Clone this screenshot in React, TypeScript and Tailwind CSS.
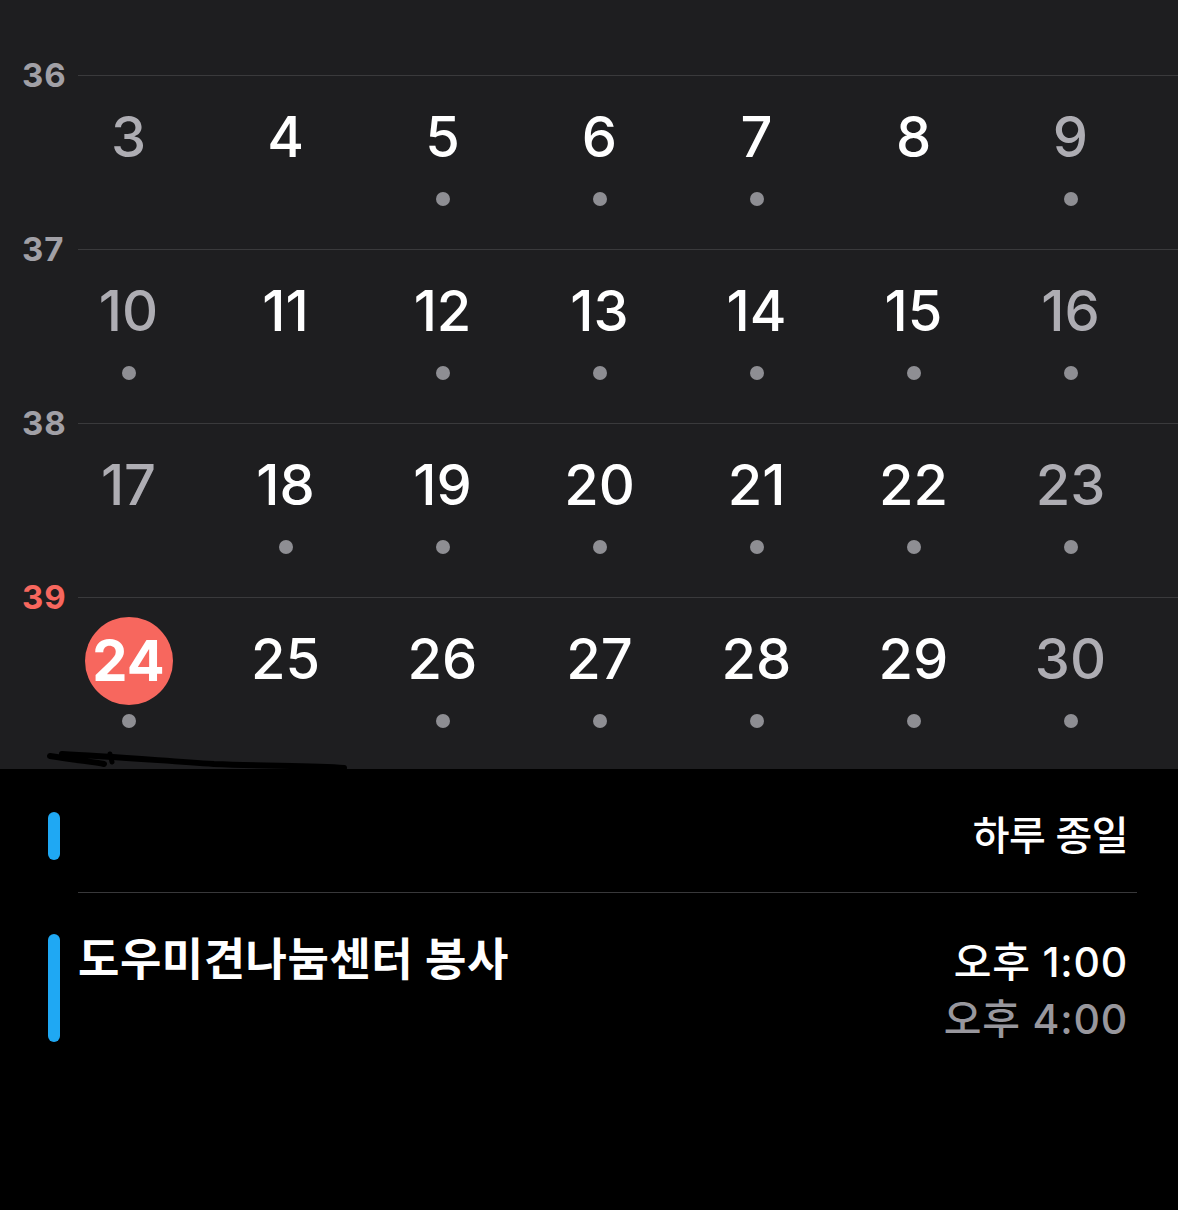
const weeks = [
  {
    no: 36,
    days: [3, 4, 5, 6, 7, 8, 9],
    dots: [false, false, true, true, true, false, true],
  },
  {
    no: 37,
    days: [10, 11, 12, 13, 14, 15, 16],
    dots: [true, false, true, true, true, true, true],
  },
  {
    no: 38,
    days: [17, 18, 19, 20, 21, 22, 23],
    dots: [false, true, true, true, true, true, true],
  },
  {
    no: 39,
    days: [24, 25, 26, 27, 28, 29, 30],
    dots: [true, false, true, true, true, true, true],
    current: true,
  },
];

const TODAY = 24;
const font = { fontFamily: '"Inter", "Noto Sans CJK KR", sans-serif' };

function DayCell({ day, dot, weekend }: { day: number; dot: boolean; weekend: boolean }) {
  const isToday = day === TODAY;
  return (
    <div className="flex flex-col items-center">
      {isToday ? (
        <span className="mt-[4px] -mb-[18px] flex h-[88px] w-[88px] items-center justify-center rounded-full bg-[#f7675e] text-[56px] font-bold leading-none text-white">
          {day}
        </span>
      ) : (
        <span
          className={`mt-[18px] flex h-[56px] items-center justify-center text-[56px] font-medium leading-none ${
            weekend ? "text-[#aeadb3]" : "text-white"
          }`}
        >
          {day}
        </span>
      )}
      {dot ? (
        <span className="mt-[27px] h-[14px] w-[14px] rounded-full bg-[#8e8e93]" />
      ) : (
        <span className="mt-[27px] h-[14px] w-[14px]" />
      )}
    </div>
  );
}

export default function App() {
  return (
    <div className="relative h-[1210px] w-[1178px] overflow-hidden bg-black" style={font}>
      <section className="flex flex-col bg-[#1e1e20] pt-[59px] pb-[14px]">
        {weeks.map((w) => (
          <div key={w.no} className="flex h-[174px] flex-col">
            <div className="flex h-8 items-center">
              <span
                className={`w-[78px] pl-[22px] text-[33px] font-bold leading-none tracking-[1px] ${
                  w.current ? "text-[#f7675e]" : "text-[#a1a0a6]"
                }`}
              >
                {w.no}
              </span>
              <div className="h-px flex-1 bg-[#3a3a3c]" />
            </div>
            <div className="ml-[50px] grid w-[1099px] grid-cols-7">
              {w.days.map((d, i) => (
                <DayCell key={d} day={d} dot={w.dots[i]} weekend={i === 0 || i === 6} />
              ))}
            </div>
          </div>
        ))}
      </section>

      <section className="flex flex-col">
        <div className="flex items-center pt-[43px] pb-[32px]">
          <span className="ml-[48px] h-12 w-3 rounded-full bg-[#1fa8f3]" />
          <span className="ml-auto mr-[50px] text-[40px] font-medium leading-none tracking-[-0.5px] text-white">
            하루 종일
          </span>
        </div>
        <div className="ml-[78px] mr-[41px] h-px bg-[#38383a]" />
        <div className="flex items-start pt-[41px]">
          <span className="ml-[48px] h-[108px] w-3 rounded-full bg-[#1fa8f3]" />
          <span className="ml-[18px] text-[45px] font-semibold leading-[52px] tracking-[0.5px] text-white">
            도우미견나눔센터 봉사
          </span>
          <div className="ml-auto mr-[50px] flex flex-col items-end text-[41px] font-medium leading-[57px] tracking-[0.8px]">
            <span className="text-white">오후 1:00</span>
            <span className="text-[#98979d]">오후 4:00</span>
          </div>
        </div>
      </section>

      <svg
        className="absolute left-[44px] top-[746px]"
        width="320"
        height="26"
        viewBox="0 0 320 26"
        fill="none"
      >
        <path
          d="M6 10 C 30 14, 50 16, 60 18 M18 8 C 60 10, 110 14, 170 18 C 220 20, 270 20, 300 22"
          stroke="#000"
          strokeWidth="6"
          strokeLinecap="round"
        />
        <path d="M66 8 L 68 16" stroke="#000" strokeWidth="5" strokeLinecap="round" />
      </svg>
    </div>
  );
}
